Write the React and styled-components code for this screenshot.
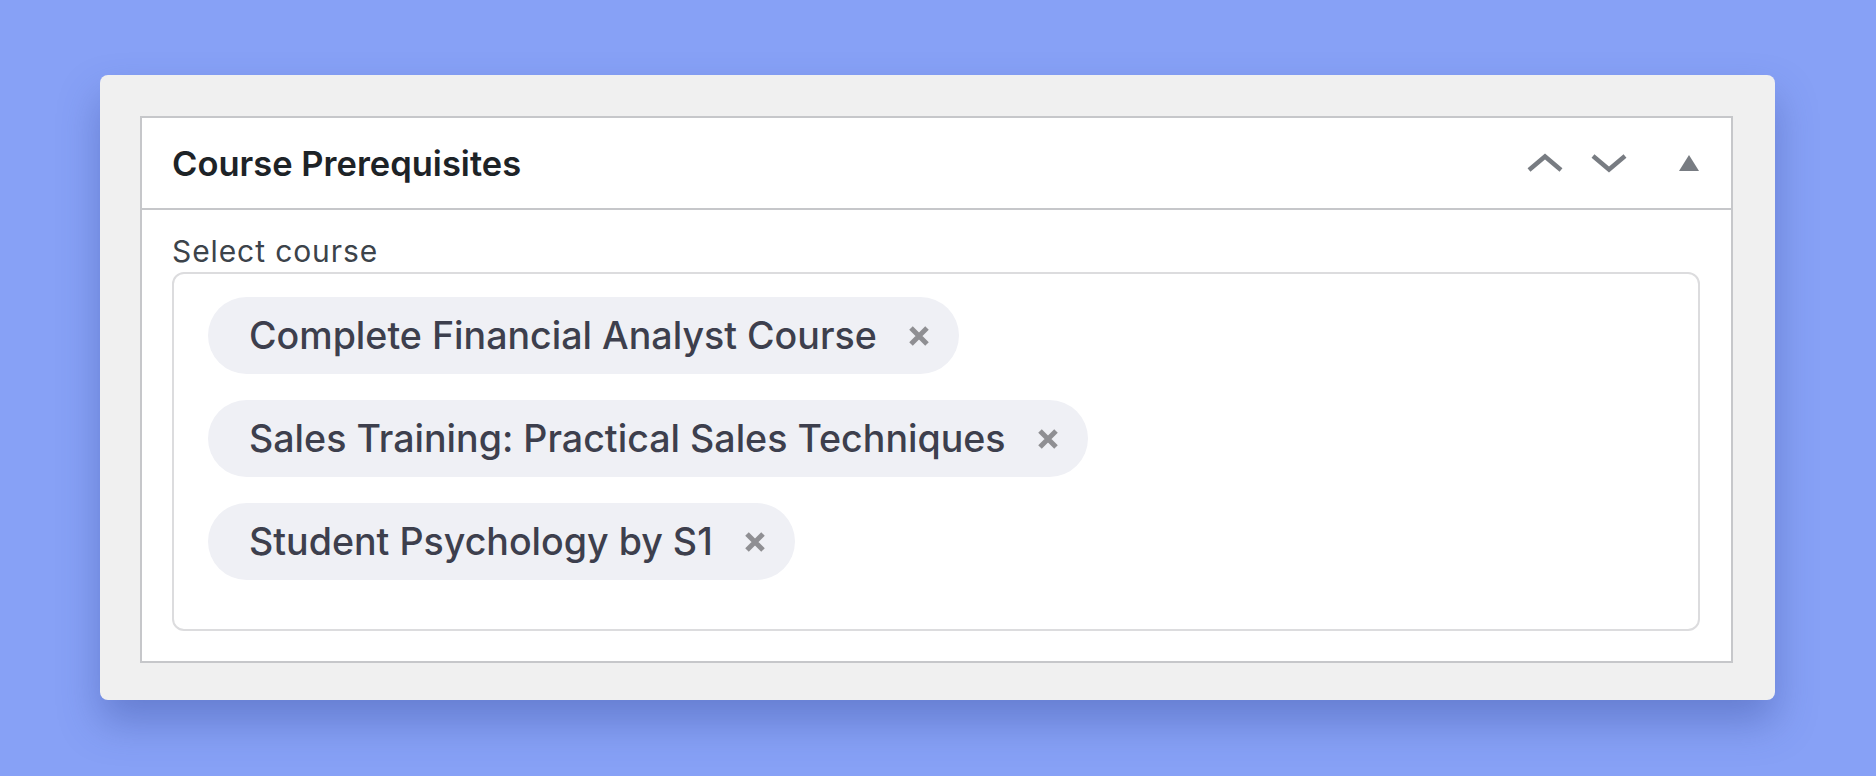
import React from 'react';
import styled, { createGlobalStyle } from 'styled-components';

const GlobalStyle = createGlobalStyle`
  html, body {
    margin: 0;
    padding: 0;
    background: #87a1f6;
  }
  body {
    font-family: Inter, "Noto Sans", "Liberation Sans", sans-serif;
    -webkit-font-smoothing: antialiased;
  }
`;

const Page = styled.div`
  min-height: 776px;
  box-sizing: border-box;
  padding: 75px 101px 75px 100px;
`;

const Card = styled.div`
  background: #f0f0f0;
  border-radius: 8px;
  padding: 41px 42px 37px 40px;
  box-shadow: 0 22px 40px rgba(40, 60, 140, 0.35);
`;

const Panel = styled.section`
  background: #fff;
  border: 2px solid #c6c7ca;
`;

const Header = styled.header`
  display: flex;
  align-items: center;
  height: 90px;
  padding: 0 30px 0 30px;
  border-bottom: 2px solid #c6c7ca;
`;

const Title = styled.h2`
  flex: 1;
  margin: 0;
  font-size: 34.5px;
  font-weight: 600;
  color: #1d2327;
`;

const Controls = styled.div`
  display: flex;
  align-items: center;
  gap: 28px;
`;

const IconButton = styled.button`
  display: flex;
  align-items: center;
  justify-content: center;
  width: ${p => p.$w || 36}px;
  height: 36px;
  padding: 0;
  margin-left: ${p => p.$offset || 0}px;
  border: 0;
  background: none;
  color: #787c82;
  cursor: pointer;
`;

const Body = styled.div`
  padding: 23px 31px 30px 30px;
`;

const Label = styled.label`
  display: block;
  font-size: 30px;
  line-height: 36px;
  letter-spacing: 0.9px;
  color: #3c434a;
  margin-bottom: 3px;
`;

const SelectBox = styled.div`
  display: flex;
  flex-direction: column;
  align-items: flex-start;
  gap: 26px;
  padding: 23px 34px 49px 34px;
  border: 2px solid #dcdcde;
  border-radius: 12px;
`;

const Chip = styled.span`
  display: inline-flex;
  align-items: center;
  gap: 30px;
  height: 77px;
  padding: 0 28px 0 41px;
  border-radius: 39px;
  background: #eff0f5;
  color: #3d3f4d;
  font-size: 37.6px;
  font-weight: 500;
`;

const Remove = styled.button`
  display: flex;
  align-items: center;
  justify-content: center;
  width: 24px;
  height: 24px;
  padding: 0;
  border: 0;
  background: none;
  color: #8f8f93;
  cursor: pointer;
`;

const courses = [
  'Complete Financial Analyst Course',
  'Sales Training: Practical Sales Techniques',
  'Student Psychology by S1',
];

const ChevronUp = () => (
  <svg width="36" height="20" viewBox="0 0 36 20">
    <path d="M2 17 L18 3.5 L34 17" fill="none" stroke="currentColor" strokeWidth="4.5" />
  </svg>
);

const ChevronDown = () => (
  <svg width="36" height="20" viewBox="0 0 36 20">
    <path d="M2 3 L18 16.5 L34 3" fill="none" stroke="currentColor" strokeWidth="4.5" />
  </svg>
);

const Triangle = () => (
  <svg width="20" height="16" viewBox="0 0 20 16">
    <path d="M10 0 L20 16 L0 16 Z" fill="currentColor" />
  </svg>
);

const Cross = () => (
  <svg width="22" height="22" viewBox="0 0 22 22">
    <path d="M3 3 L19 19 M19 3 L3 19" stroke="currentColor" strokeWidth="5" />
  </svg>
);

const App = () => {
  return (
    <>
      <GlobalStyle />
      <Page>
        <Card>
          <Panel>
            <Header>
              <Title>Course Prerequisites</Title>
              <Controls>
                <IconButton aria-label="Move up"><ChevronUp /></IconButton>
                <IconButton aria-label="Move down"><ChevronDown /></IconButton>
                <IconButton $w={24} $offset={22} aria-label="Toggle panel"><Triangle /></IconButton>
              </Controls>
            </Header>
            <Body>
              <Label>Select course</Label>
              <SelectBox>
                {courses.map(c => (
                  <Chip key={c}>
                    {c}
                    <Remove aria-label={`Remove ${c}`}><Cross /></Remove>
                  </Chip>
                ))}
              </SelectBox>
            </Body>
          </Panel>
        </Card>
      </Page>
    </>
  );
};

export default App;
